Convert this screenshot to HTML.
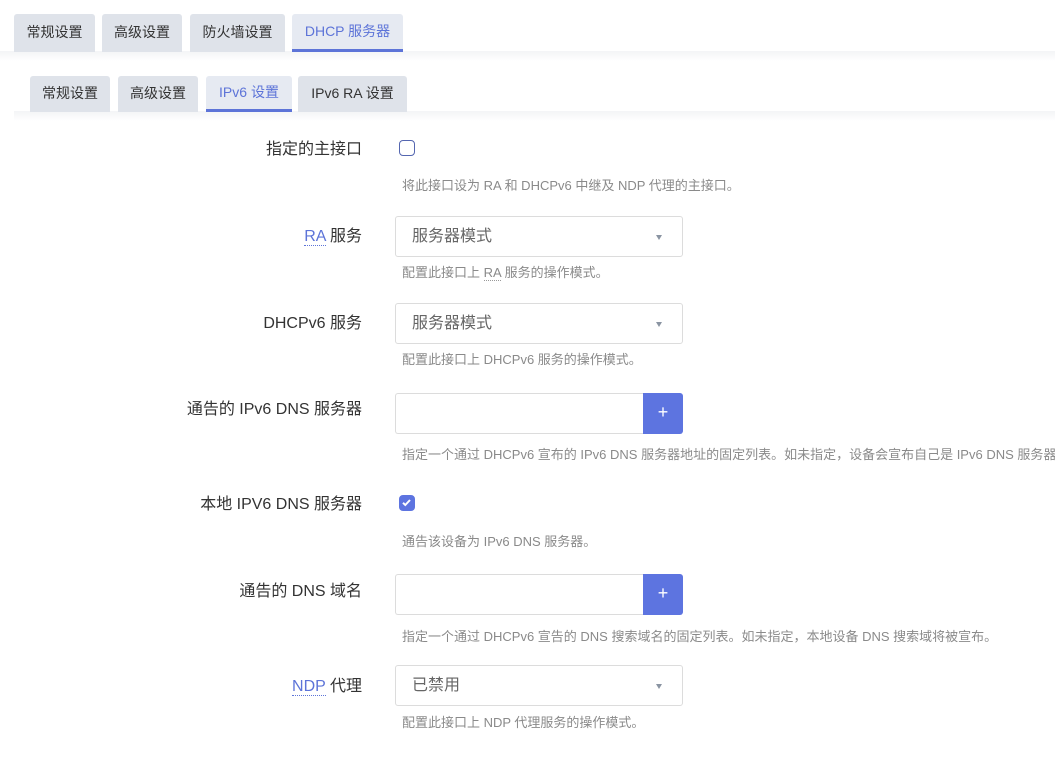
<!DOCTYPE html>
<html><head><meta charset="utf-8"><style>
*{box-sizing:border-box;margin:0;padding:0}
body{width:1055px;height:782px;overflow:hidden;background:#fff;font-family:"Liberation Sans","Noto Sans CJK SC",sans-serif;color:#333;position:relative}
.tab{position:absolute;background:#dfe3ea;border-radius:3px 3px 0 0;font-size:14px;color:#333;text-align:center;line-height:36px}
.tab.a{background:#e6eaf2;color:#5d74d8;border-bottom:3px solid #5d74d8}
.sh{position:absolute;left:0;right:0;height:10px;background:linear-gradient(#f3f4f6,#fff)}
.lbl{position:absolute;right:693px;font-size:16px;color:#333;white-space:nowrap}
.ab{color:#5d74d8;border-bottom:1px dotted #5d74d8}
.help{position:absolute;left:402px;font-size:13px;color:#8a8a8a;white-space:nowrap}
.sel{position:absolute;left:395px;width:288px;height:41px;border:1px solid #dcdcdc;border-radius:3px;font-size:16px;color:#666;padding-left:16px;line-height:39px}
.sel:after{content:"";position:absolute;right:20px;top:18px;border:3px solid transparent;border-top:5px solid #8a94a2;border-bottom:0}
.inp{position:absolute;left:395px;width:248px;height:41px;border:1px solid #dcdcdc;border-right:0;border-radius:3px 0 0 3px}
.btn{position:absolute;left:643px;width:40px;height:41px;background:#5d74e0;border-radius:0 3px 3px 0;color:#fff;font-size:18px;text-align:center;line-height:39px}
.cb{position:absolute;left:399px;width:16px;height:16px;border:1.5px solid #5466b0;border-radius:4px}
.cb.c{background:#5d74e0;border-color:#5d74e0}
</style></head><body>
<div class="sh" style="top:51px"></div>
<div class="tab" style="left:14px;top:14px;width:81px;height:38px">常规设置</div>
<div class="tab" style="left:102px;top:14px;width:80px;height:38px">高级设置</div>
<div class="tab" style="left:190px;top:14px;width:95px;height:38px">防火墙设置</div>
<div class="tab a" style="left:292px;top:14px;width:111px;height:38px;line-height:35px">DHCP 服务器</div>
<div class="sh" style="top:111px;left:14px"></div>
<div class="tab" style="left:30px;top:76px;width:80px;height:36px;line-height:34px">常规设置</div>
<div class="tab" style="left:118px;top:76px;width:80px;height:36px;line-height:34px">高级设置</div>
<div class="tab a" style="left:206px;top:76px;width:86px;height:36px;line-height:32px">IPv6 设置</div>
<div class="tab" style="left:298px;top:76px;width:109px;height:36px;line-height:34px">IPv6 RA 设置</div>

<div class="lbl" style="top:135px">指定的主接口</div>
<div class="cb" style="top:140px"></div>
<div class="help" style="top:175px">将此接口设为 RA 和 DHCPv6 中继及 NDP 代理的主接口。</div>

<div class="lbl" style="top:222px"><span class="ab">RA</span> 服务</div>
<div class="sel" style="top:216px">服务器模式</div>
<div class="help" style="top:262px">配置此接口上 <span style="border-bottom:1px dotted #999">RA</span> 服务的操作模式。</div>

<div class="lbl" style="top:309px">DHCPv6 服务</div>
<div class="sel" style="top:303px">服务器模式</div>
<div class="help" style="top:349px">配置此接口上 DHCPv6 服务的操作模式。</div>

<div class="lbl" style="top:395px">通告的 IPv6 DNS 服务器</div>
<div class="inp" style="top:393px"></div><div class="btn" style="top:393px">+</div>
<div class="help" style="top:444px">指定一个通过 DHCPv6 宣布的 IPv6 DNS 服务器地址的固定列表。如未指定，设备会宣布自己是 IPv6 DNS 服务器。</div>

<div class="lbl" style="top:490px">本地 IPV6 DNS 服务器</div>
<div class="cb c" style="top:495px"><svg width="13" height="13" viewBox="0 0 13 13" style="position:absolute;left:0;top:0"><path d="M3 6.8l2.3 2.2L10 4" stroke="#fff" stroke-width="2" fill="none"/></svg></div>
<div class="help" style="top:531px">通告该设备为 IPv6 DNS 服务器。</div>

<div class="lbl" style="top:577px">通告的 DNS 域名</div>
<div class="inp" style="top:574px"></div><div class="btn" style="top:574px">+</div>
<div class="help" style="top:626px">指定一个通过 DHCPv6 宣告的 DNS 搜索域名的固定列表。如未指定，本地设备 DNS 搜索域将被宣布。</div>

<div class="lbl" style="top:672px"><span class="ab">NDP</span> 代理</div>
<div class="sel" style="top:665px">已禁用</div>
<div class="help" style="top:712px">配置此接口上 NDP 代理服务的操作模式。</div>
</body></html>
